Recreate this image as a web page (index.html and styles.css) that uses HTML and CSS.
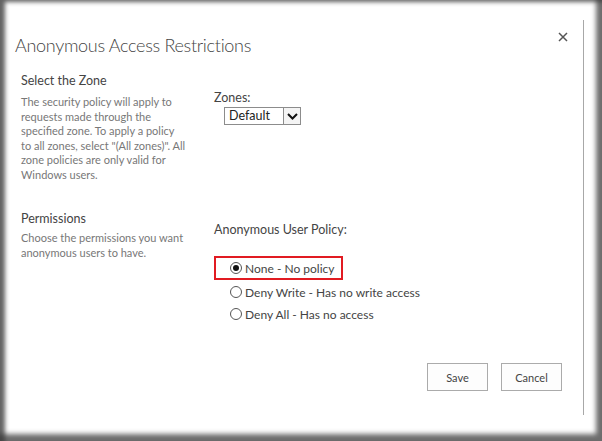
FILE: index.html
```html
<!DOCTYPE html>
<html lang="en">

<head>
    <meta charset="UTF-8" />
    <meta name="viewport" content="width=device-width, initial-scale=1.0" />
    <link rel="stylesheet" href="styles.css">
    <title>Anonymous Access Restrictions</title>
</head>

<body>
    <div class="frame">
        <div class="dialog">
            <div class="title-bar">
                <h1 class="title">Anonymous Access Restrictions</h1>
                <span class="close">
                    <svg width="10" height="10" viewBox="0 0 10 10">
                        <path d="M1 1 L9 9 M9 1 L1 9" stroke="#555" stroke-width="1.5" />
                    </svg>
                </span>
            </div>

            <div class="section zone">
                <div class="label-col">
                    <h3 class="heading">Select the Zone</h3>
                    <p class="desc">The security policy will apply to requests made through the specified zone. To apply a policy to all zones, select "(All zones)". All zone policies are only valid for Windows users.</p>
                </div>
                <div class="field-col">
                    <div class="field-label">Zones:</div>
                    <div class="select">
                        <span class="select-value">Default</span>
                        <span class="select-btn">
                            <svg width="11" height="7" viewBox="0 0 11 7">
                                <path d="M1 1 L5.5 5.5 L10 1" fill="none" stroke="#111" stroke-width="2" />
                            </svg>
                        </span>
                    </div>
                </div>
            </div>

            <div class="section perms">
                <div class="label-col">
                    <h3 class="heading">Permissions</h3>
                    <p class="desc">Choose the permissions you want anonymous users to have.</p>
                </div>
                <div class="field-col">
                    <div class="field-label">Anonymous User Policy:</div>
                    <div class="options">
                        <div class="option highlight"><span class="radio checked"></span>None - No policy</div>
                        <div class="option"><span class="radio"></span>Deny Write - Has no write access</div>
                        <div class="option"><span class="radio"></span>Deny All - Has no access</div>
                    </div>
                </div>
            </div>

            <div class="buttons">
                <button type="button" class="btn">Save</button>
                <button type="button" class="btn">Cancel</button>
            </div>
        </div>
    </div>
</body>

</html>
```

FILE: styles.css
```css
* {
    margin: 0;
    padding: 0;
    box-sizing: border-box;
    font-family: "Lato", "Open Sans", sans-serif;
}

body {
    background-color: #ffffff;
}

.frame {
    width: 602px;
    height: 441px;
    padding-top: 20px;
    background-color: #ffffff;
    box-shadow: inset 6px 3px 4px -1px rgba(60, 60, 60, 0.8),
        inset -8px -9px 5px -2px rgba(60, 60, 60, 0.75);
}

.dialog {
    width: 584px;
    height: 395px;
    border-right: 1px solid #a8a8a8;
    padding: 0 21px 0 15px;
    display: flex;
    flex-direction: column;
}

.title-bar {
    display: flex;
    justify-content: space-between;
    align-items: flex-start;
    height: 52px;
}

.title {
    font-weight: 300;
    font-size: 18px;
    letter-spacing: -0.3px;
    color: #444444;
    margin-top: 14px;
}

.close {
    display: flex;
    margin-top: 12px;
    margin-right: -6px;
}

.section {
    display: flex;
    padding-left: 6px;
}

.label-col {
    width: 193px;
}

.heading {
    font-weight: 400;
    font-size: 12.5px;
    color: #444444;
    line-height: 18px;
}

.desc {
    width: 166px;
    margin-top: 5px;
    font-size: 11px;
    line-height: 14.5px;
    color: #777777;
}

.perms .desc {
    margin-top: 3px;
}

.field-col {
    flex: 1;
}

.field-label {
    font-size: 12.5px;
    color: #444444;
}

.zone .field-col {
    padding-top: 18px;
}

.select {
    display: flex;
    width: 77px;
    height: 18px;
    margin-left: 10px;
    margin-top: 2px;
    border: 1px solid #8c8c8c;
}

.select-value {
    flex: 1;
    font-size: 12.5px;
    line-height: 16px;
    color: #222222;
    padding-left: 4px;
}

.select-btn {
    width: 17px;
    border-left: 1px solid #8c8c8c;
    display: flex;
    align-items: center;
    justify-content: center;
    background-color: #f4f4f4;
}

.perms {
    margin-top: 28px;
}

.perms .field-col {
    padding-top: 12px;
}

.options {
    margin-top: 19px;
}

.option {
    display: flex;
    align-items: center;
    height: 22px;
    padding-left: 16px;
    font-size: 12px;
    color: #444444;
}

.option.highlight {
    width: 129px;
    height: 24px;
    margin-bottom: 1px;
    border: 2px solid #e11b22;
    padding-left: 14px;
}

.radio {
    width: 12px;
    height: 12px;
    border: 1px solid #555555;
    border-radius: 50%;
    margin-right: 3px;
    position: relative;
    flex-shrink: 0;
}

.radio.checked::after {
    content: "";
    position: absolute;
    top: 2px;
    left: 2px;
    width: 6px;
    height: 6px;
    border-radius: 50%;
    background-color: #111111;
}

.buttons {
    margin-top: auto;
    margin-bottom: 24px;
    display: flex;
    justify-content: flex-end;
    gap: 13px;
}

.btn {
    width: 61px;
    height: 28px;
    font-size: 11px;
    color: #444444;
    border: 1px solid #ababab;
    background-color: #fdfdfd;
}
```
